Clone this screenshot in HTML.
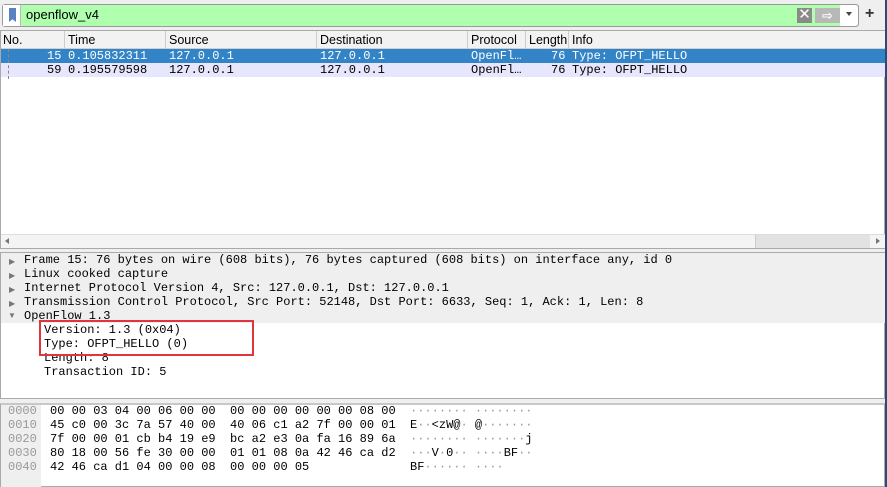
<!DOCTYPE html>
<html><head><style>
*{margin:0;padding:0;box-sizing:border-box}
body{width:887px;height:487px;overflow:hidden;background:#efefef;position:relative;font-family:"Liberation Sans","DejaVu Sans",sans-serif;font-size:12.5px;color:#000}
.a{position:absolute}
.mono{font-family:"Liberation Mono","DejaVu Sans Mono",monospace;font-size:12px;white-space:pre}
.r1{top:49px;color:#fff}.r2{top:63px}
</style></head><body>
<div class="a" style="left:885px;top:0;width:2px;height:487px;background:#2c4a78"></div>
<!-- filter bar -->
<div class="a" style="left:2px;top:4px;width:857px;height:23px;border:1px solid #9a9a9a;border-radius:3px;background:#afffaf"></div>
<div class="a" style="left:3px;top:5px;width:18px;height:21px;background:#fff;border-right:1px solid #bbb"></div>
<div class="a" style="left:9px;top:8px;width:7px;height:14px;background:#5a82c0;clip-path:polygon(0 0,100% 0,100% 100%,50% 80%,0 100%)"></div>
<div class="a" style="left:26px;top:7px;font-size:13px">openflow_v4</div>
<div class="a" style="left:797px;top:8px;width:15px;height:15px;background:#8a8a8a;color:#fff;font-size:15px;line-height:14px;text-align:center">✕</div>
<div class="a" style="left:815px;top:8px;width:25px;height:15px;background:#b8b8b8;color:#fff;font-size:13px;line-height:15px;text-align:center;font-weight:bold">⇨</div>
<div class="a" style="left:840px;top:5px;width:18px;height:21px;background:#fff;border-radius:0 3px 3px 0"></div>
<div class="a" style="left:846px;top:12px;border-left:3px solid transparent;border-right:3px solid transparent;border-top:4px solid #444"></div>
<div class="a" style="left:865px;top:5px;font-size:16px;font-weight:bold;color:#333">+</div>
<!-- packet list -->
<div class="a" style="left:0;top:30px;width:885px;height:219px;background:#fff;border:1px solid #aaa"></div>
<div class="a" style="left:1px;top:31px;width:884px;height:18px;background:#f2f2f2;border-bottom:1px solid #d0d0d0"></div>
<div class="a" style="left:3px;top:33px">No.</div>
<div class="a" style="left:64px;top:31px;height:18px;border-left:1px solid #ccc;padding-left:3px;padding-top:2px">Time</div>
<div class="a" style="left:165px;top:31px;height:18px;border-left:1px solid #ccc;padding-left:3px;padding-top:2px">Source</div>
<div class="a" style="left:316px;top:31px;height:18px;border-left:1px solid #ccc;padding-left:3px;padding-top:2px">Destination</div>
<div class="a" style="left:467px;top:31px;height:18px;border-left:1px solid #ccc;padding-left:3px;padding-top:2px">Protocol</div>
<div class="a" style="left:525px;top:31px;height:18px;border-left:1px solid #ccc;padding-left:3px;padding-top:2px;width:43px;overflow:hidden;white-space:nowrap">Length</div>
<div class="a" style="left:568px;top:31px;height:18px;border-left:1px solid #ccc;padding-left:3px;padding-top:2px">Info</div>
<div class="a" style="left:1px;top:49px;width:884px;height:14px;background:#3384c6"></div>
<div class="a" style="left:1px;top:63px;width:884px;height:14px;background:#e6e6fc"></div>
<div class="a" style="left:8px;top:49px;height:30px;border-left:1px dashed #888"></div>
<div class="a mono r1" style="left:47px">15</div><div class="a mono r1" style="left:68px">0.105832311</div><div class="a mono r1" style="left:169px">127.0.0.1</div><div class="a mono r1" style="left:320px">127.0.0.1</div><div class="a mono r1" style="left:471px">OpenFl…</div><div class="a mono r1" style="left:551px">76</div><div class="a mono r1" style="left:572px">Type: OFPT_HELLO</div>
<div class="a mono r2" style="left:47px">59</div><div class="a mono r2" style="left:68px">0.195579598</div><div class="a mono r2" style="left:169px">127.0.0.1</div><div class="a mono r2" style="left:320px">127.0.0.1</div><div class="a mono r2" style="left:471px">OpenFl…</div><div class="a mono r2" style="left:551px">76</div><div class="a mono r2" style="left:572px">Type: OFPT_HELLO</div>
<!-- hscroll -->
<div class="a" style="left:1px;top:234px;width:884px;height:14px;background:#f4f4f4;border-top:1px solid #ddd"></div>
<div class="a" style="left:755px;top:235px;width:115px;height:13px;background:#e2e2e2;border-left:1px solid #ccc"></div>
<div class="a" style="left:5px;top:238px;border-top:3px solid transparent;border-bottom:3px solid transparent;border-right:4px solid #777"></div>
<div class="a" style="left:876px;top:238px;border-top:3px solid transparent;border-bottom:3px solid transparent;border-left:4px solid #777"></div>
<!-- details -->
<div class="a" style="left:0;top:252px;width:885px;height:147px;background:#fff;border:1px solid #aaa"></div>
<div class="a" style="left:1px;top:253px;width:884px;height:70px;background:#efefef"></div>
<div class="a" style="left:9px;top:255px;font-size:8px;color:#777;line-height:14px">▶<br>▶<br>▶<br>▶</div>
<div class="a" style="left:8px;top:311px;font-size:8px;color:#777">▼</div>
<div class="a mono" style="left:24px;top:253px;line-height:14px">Frame 15: 76 bytes on wire (608 bits), 76 bytes captured (608 bits) on interface any, id 0
Linux cooked capture
Internet Protocol Version 4, Src: 127.0.0.1, Dst: 127.0.0.1
Transmission Control Protocol, Src Port: 52148, Dst Port: 6633, Seq: 1, Ack: 1, Len: 8
OpenFlow 1.3</div>
<div class="a mono" style="left:44px;top:323px;line-height:14px">Version: 1.3 (0x04)
Type: OFPT_HELLO (0)
Length: 8
Transaction ID: 5</div>
<div class="a" style="left:39px;top:320px;width:215px;height:36px;border:2px solid #e0353c"></div>
<!-- hex -->
<div class="a" style="left:0;top:403px;width:885px;height:84px;background:#fff;border:1px solid #aaa;border-top:2px solid #c8c8c8"></div>
<div class="a" style="left:1px;top:405px;width:40px;height:82px;background:#efefef"></div>
<div class="a mono" style="left:8px;top:404px;line-height:14px;color:#999">0000
0010
0020
0030
0040</div>
<div class="a mono" style="left:50px;top:404px;line-height:14px">00 00 03 04 00 06 00 00  00 00 00 00 00 00 08 00  <span style="color:#999">········ ········</span>
45 c0 00 3c 7a 57 40 00  40 06 c1 a2 7f 00 00 01  E<span style="color:#999">··</span>&lt;zW@<span style="color:#999">·</span> @<span style="color:#999">·······</span>
7f 00 00 01 cb b4 19 e9  bc a2 e3 0a fa 16 89 6a  <span style="color:#999">········ ·······</span>j
80 18 00 56 fe 30 00 00  01 01 08 0a 42 46 ca d2  <span style="color:#999">···</span>V<span style="color:#999">·</span>0<span style="color:#999">·· ····</span>BF<span style="color:#999">··</span>
42 46 ca d1 04 00 00 08  00 00 00 05              BF<span style="color:#999">······ ····</span></div>
</body></html>
